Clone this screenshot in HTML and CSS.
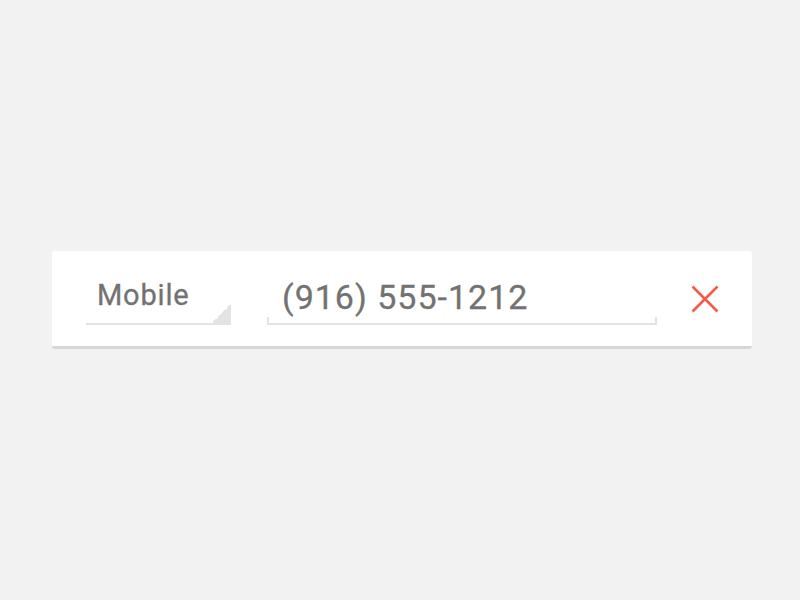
FILE: index.html
```html
<!DOCTYPE html>
<html lang="en">
<head>
    <meta charset="UTF-8">
    <meta name="viewport" content="width=device-width, initial-scale=1.0">
    <title>Phone Field</title>
    <link rel="stylesheet" href="styles.css">
</head>
<body>
    <div class="phone-row">
        <div class="type-select">Mobile</div>
        <div class="number-field">(916) 555-1212</div>
        <button class="remove-btn" aria-label="Remove">
            <svg width="28" height="28" viewBox="0 0 28 28">
                <path d="M1.5 1.5 L26.5 26.5 M26.5 1.5 L1.5 26.5" stroke="#f5594a" stroke-width="2.6" fill="none"/>
            </svg>
        </button>
    </div>
</body>
</html>
```

FILE: styles.css
```css
body {
    margin: 0;
    background: #f2f2f2;
    font-family: Roboto, "Noto Sans", sans-serif;
    color: #727272;
}
.phone-row {
    display: flex;
    align-items: flex-end;
    box-sizing: border-box;
    width: 700px;
    height: 98px;
    margin: 251px 0 0 52px;
    padding: 0 0 21px 34px;
    background: #fff;
    border-radius: 3px;
    border-bottom: 3px solid #d6d6d6;
}
.type-select {
    position: relative;
    width: 145px;
    box-sizing: border-box;
    padding: 0 0 13px 11px;
    font-size: 29px;
    line-height: 29px;
    letter-spacing: 0.8px;
    -webkit-text-stroke: 0.3px #727272;
    border-bottom: 2px solid #e3e3e3;
}
.type-select::after {
    content: "";
    position: absolute;
    right: 0;
    bottom: 0;
    width: 19px;
    height: 19px;
    background: linear-gradient(to top left, #e3e3e3 50%, transparent 50%);
}
.number-field {
    position: relative;
    width: 390px;
    box-sizing: border-box;
    margin-left: 36px;
    padding: 0 0 9px 15px;
    font-size: 34px;
    line-height: 34px;
    letter-spacing: 1px;
    -webkit-text-stroke: 0.3px #727272;
    border-bottom: 2px solid #e3e3e3;
}
.number-field::before,
.number-field::after {
    content: "";
    position: absolute;
    bottom: 0;
    width: 2px;
    height: 6px;
    background: #e3e3e3;
}
.number-field::before { left: 0; }
.number-field::after { right: 0; }
.remove-btn {
    flex: 1;
    align-self: center;
    display: flex;
    justify-content: center;
    padding: 0;
    margin: 21px 0 0 0;
    border: none;
    background: none;
    cursor: pointer;
}
```
